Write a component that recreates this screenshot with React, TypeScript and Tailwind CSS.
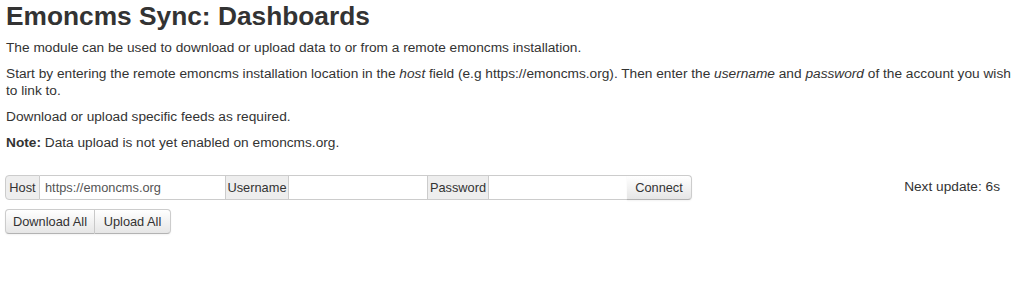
import React from 'react';

const font = { fontFamily: '"Liberation Sans", Arial, sans-serif' };

function AddOn({ children, w }: { children: React.ReactNode; w: string }) {
  return (
    <span className={'flex items-center justify-center h-full bg-[#eeeeee] border border-[#cccccc] text-[12.8px] text-[#333] whitespace-nowrap ' + w}>
      {children}
    </span>
  );
}

const btn =
  'h-full whitespace-nowrap text-[12.8px] text-[#333] bg-gradient-to-b from-white to-[#e6e6e6] border border-[#cccccc] border-b-[#b3b3b3] shadow-[inset_0_1px_0_rgba(255,255,255,0.2),0_1px_2px_rgba(0,0,0,0.05)]';

export default function App() {
  return (
    <div className="w-[1024px] h-[283px] bg-white text-[#333] px-[6px]" style={font}>
      <h3 className="text-[26.3px] font-bold leading-[30px] pt-[1px] text-[#333]">Emoncms Sync: Dashboards</h3>
      <div className="text-[13.7px] leading-[17px] mt-[8px]">
        <p className="mb-[9px]">The module can be used to download or upload data to or from a remote emoncms installation.</p>
        <p className="mb-[9px]">
          Start by entering the remote emoncms installation location in the <i>host</i> field (e.g https://emoncms.org). Then enter the{' '}
          <i>username</i> and <i>password</i> of the account you wish to link to.
        </p>
        <p className="mb-[9px]">Download or upload specific feeds as required.</p>
        <p>
          <b>Note:</b> Data upload is not yet enabled on emoncms.org.
        </p>
      </div>

      <div className="flex items-center justify-between mt-[24px] pr-[18px]">
        <div className="flex h-[25px] items-stretch -ml-[1px]">
          <span className="flex items-center justify-center w-[35px] bg-[#eeeeee] border border-[#cccccc] rounded-l-[4px] text-[12.8px]">Host</span>
          <input
            className="w-[185px] h-full border-y border-[#cccccc] px-[5px] text-[12.8px] text-[#555] outline-none"
            style={font}
            defaultValue="https://emoncms.org"
          />
          <AddOn w="w-[64px]">Username</AddOn>
          <input className="w-[138px] h-full border-y border-[#cccccc] outline-none" />
          <AddOn w="w-[62px]">Password</AddOn>
          <input className="w-[138px] h-full border-y border-[#cccccc] outline-none" type="password" />
          <button className={btn + ' w-[65px] rounded-r-[4px] border-l-0'} style={font}>
            Connect
          </button>
        </div>
        <div className="text-[13.7px]">Next update: 6s</div>
      </div>

      <div className="flex h-[25px] mt-[9px] -ml-[1px]">
        <button className={btn + ' w-[90px] rounded-l-[4px]'} style={font}>
          Download All
        </button>
        <button className={btn + ' w-[76px] rounded-r-[4px] border-l-0'} style={font}>
          Upload All
        </button>
      </div>
    </div>
  );
}
